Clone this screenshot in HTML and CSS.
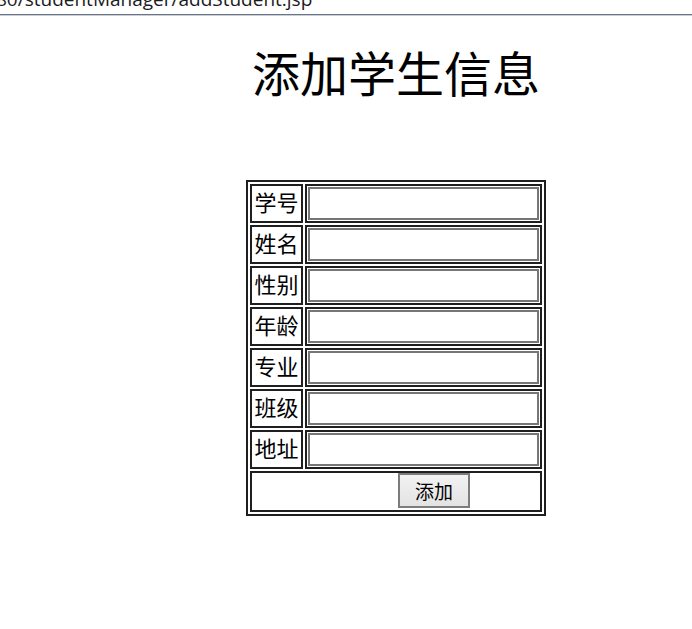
FILE: index.html
```html
<!DOCTYPE html>
<html lang="zh-CN">
<head>
<meta charset="utf-8">
<title>添加学生信息</title>
<link rel="stylesheet" href="styles.css">
</head>
<body>
<div class="urlbar"><span class="url">80/studentManager/addStudent.jsp</span></div>
<div class="page">
  <div class="title">添加学生信息</div>
  <form class="form-wrap">
    <table class="form">
      <tr><td class="label">学号</td><td class="field"><input type="text"></td></tr>
      <tr><td class="label">姓名</td><td class="field"><input type="text"></td></tr>
      <tr><td class="label">性别</td><td class="field"><input type="text"></td></tr>
      <tr><td class="label">年龄</td><td class="field"><input type="text"></td></tr>
      <tr><td class="label">专业</td><td class="field"><input type="text"></td></tr>
      <tr><td class="label">班级</td><td class="field"><input type="text"></td></tr>
      <tr><td class="label">地址</td><td class="field"><input type="text"></td></tr>
      <tr><td class="actions" colspan="2"><button type="button" class="btn">添加</button></td></tr>
    </table>
  </form>
</div>
</body>
</html>
```
FILE: styles.css
```css
html, body {
  margin: 0;
  padding: 0;
  background: #ffffff;
  overflow: hidden;
}

.urlbar {
  height: 14px;
  overflow: hidden;
  border-bottom: 1px solid #6f747c;
  box-shadow: 0 1px 0 #c3d0e2;
  white-space: nowrap;
}

.url {
  display: block;
  margin-top: -11px;
  margin-left: -4px;
  font-family: "Open Sans", "Noto Sans", sans-serif;
  font-size: 19px;
  line-height: 20px;
  color: #1a1a1a;
}

.page {
  padding-left: 100px;
  width: 592px;
}

.title {
  margin-top: 32px;
  text-align: center;
  font-family: "Noto Sans CJK SC", sans-serif;
  font-size: 48px;
  line-height: 48px;
  color: #000;
}

.form-wrap {
  margin: 85px 0 0;
}

.form {
  margin: 0 auto;
  border: 2px solid #1f1f1f;
  border-spacing: 2px;
  width: 300px;
  box-sizing: border-box;
}

.form td {
  border: 2px solid #1f1f1f;
  padding: 1px;
}

.label {
  width: 53px;
  height: 35px;
  box-sizing: border-box;
  text-align: center;
  font-family: "Noto Sans CJK SC", sans-serif;
  font-size: 22px;
  line-height: 28px;
  color: #000;
  padding: 0 0 6px !important;
}

.field input {
  display: block;
  width: 231px;
  height: 33px;
  box-sizing: border-box;
  margin: 0;
  border: 2px solid #767676;
  padding: 0 4px;
  font-size: 16px;
  background: #fff;
  outline: none;
}

.actions {
  height: 41px;
  box-sizing: border-box;
  padding: 0 0 2px 146px !important;
}

.btn {
  display: block;
  width: 72px;
  height: 35px;
  border: 2px solid #7c7c7c;
  background: linear-gradient(#f2f2f2, #e3e3e3);
  font-family: "Noto Sans CJK SC", sans-serif;
  font-size: 19px;
  line-height: 20px;
  color: #000;
  padding: 0;
}
```
